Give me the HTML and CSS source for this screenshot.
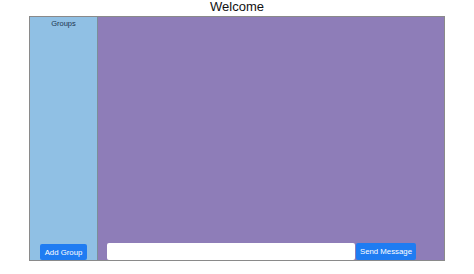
FILE: index.html
```html
<!DOCTYPE html>
<html>
<head>
<meta charset="utf-8">
<link rel="stylesheet" href="styles.css">
</head>
<body>
<h1 class="title">Welcome</h1>
<div class="chat">
  <aside class="sidebar">
    <div class="groups-title">Groups</div>
    <div class="sidebar-foot">
      <button class="btn btn-add">Add Group</button>
    </div>
  </aside>
  <main class="main">
    <div class="messages"></div>
    <div class="composer">
      <textarea class="input"></textarea>
      <button class="btn btn-send">Send Message</button>
    </div>
  </main>
</div>
</body>
</html>
```

FILE: styles.css
```css
html, body {
  margin: 0;
  padding: 0;
  background: #ffffff;
  font-family: "Liberation Sans", Arial, sans-serif;
}
.title {
  margin: 0;
  height: 16px;
  font-size: 13px;
  line-height: 13px;
  font-weight: normal;
  text-align: center;
  color: #111;
}
.chat {
  width: 416px;
  height: 245px;
  margin: 0 auto;
  box-sizing: border-box;
  border: 1px solid #8a8a8a;
  display: flex;
}
.sidebar {
  width: 68px;
  box-sizing: border-box;
  background: #90c0e4;
  border-right: 1px solid #7c8e98;
  display: flex;
  flex-direction: column;
}
.groups-title {
  font-size: 7.5px;
  text-align: center;
  color: #1d3550;
  padding-top: 2px;
}
.sidebar-foot {
  margin-top: auto;
  padding-left: 10px;
}
.main {
  flex: 1;
  background: #8e7db8;
  display: flex;
  flex-direction: column;
}
.messages {
  flex: 1;
}
.composer {
  display: flex;
  align-items: flex-end;
  padding-left: 9px;
  gap: 1px;
}
.input {
  width: 248px;
  height: 17px;
  box-sizing: border-box;
  margin: 0;
  border: none;
  border-radius: 2px;
  background: #ffffff;
  resize: none;
  display: block;
  padding: 0;
}
.btn {
  display: block;
  margin: 0;
  border: none;
  border-radius: 2px;
  background: #1f7cf2;
  color: #ffffff;
  font-family: "Liberation Sans", Arial, sans-serif;
  font-size: 7.8px;
  padding: 0;
  height: 17px;
}
.btn-add {
  width: 47px;
  height: 16px;
}
.btn-send {
  width: 60px;
}
```
